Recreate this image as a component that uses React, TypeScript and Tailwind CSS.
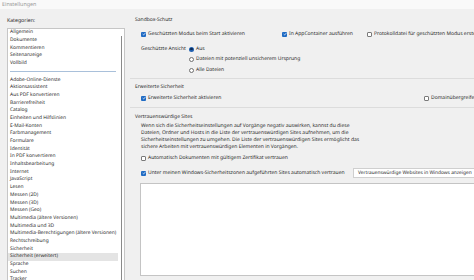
import React from "react";

const top = [
  "Allgemein",
  "Dokumente",
  "Kommentieren",
  "Seitenanzeige",
  "Vollbild",
];
const rest = [
  "Adobe-Online-Dienste",
  "Aktionsassistent",
  "Aus PDF konvertieren",
  "Barrierefreiheit",
  "Catalog",
  "Einheiten und Hilfslinien",
  "E-Mail-Konten",
  "Farbmanagement",
  "Formulare",
  "Identität",
  "In PDF konvertieren",
  "Inhaltsbearbeitung",
  "Internet",
  "JavaScript",
  "Lesen",
  "Messen (2D)",
  "Messen (3D)",
  "Messen (Geo)",
  "Multimedia (ältere Versionen)",
  "Multimedia und 3D",
  "Multimedia-Berechtigungen (ältere Versionen)",
  "Rechtschreibung",
  "Sicherheit",
  "Sicherheit (erweitert)",
  "Sprache",
  "Suchen",
  "Tracker",
];

function Check({ on }: { on?: boolean }) {
  return on ? (
    <span className="w-[5px] h-[5px] shrink-0 rounded-[1px] bg-[#1f6bc4] flex items-center justify-center">
      <svg width="4" height="4" viewBox="0 0 8 8">
        <path d="M1.3 4.2 L3.2 6 L6.8 2" stroke="#fff" strokeWidth="1.4" fill="none" />
      </svg>
    </span>
  ) : (
    <span className="w-[5px] h-[5px] shrink-0 rounded-[1px] bg-white border border-[#7a7a7a] [border-width:0.7px]" />
  );
}

function Radio({ on }: { on?: boolean }) {
  return on ? (
    <span className="w-[5px] h-[5px] shrink-0 rounded-full bg-[#1f5fb0] flex items-center justify-center">
      <span className="w-[2.4px] h-[2.4px] rounded-full bg-[#0b2a55]" />
    </span>
  ) : (
    <span className="w-[5px] h-[5px] shrink-0 rounded-full bg-white border border-[#6f6f6f] [border-width:0.7px]" />
  );
}

function Item({ label, sel }: { label: string; sel?: boolean }) {
  return (
    <div
      className={`h-[7.7px] shrink-0 flex items-center pl-[2px] whitespace-nowrap ${
        sel ? "bg-[#e4e4e4]" : ""
      }`}
    >
      {label}
    </div>
  );
}

export default function App() {
  return (
    <div className="w-[474px] h-[280px] overflow-hidden bg-[#f0f0f0] font-['Noto_Sans',sans-serif] text-[5px] [text-rendering:geometricPrecision] leading-none text-[#2a2a2a] flex flex-col">
      <div className="h-[9px] shrink-0 bg-[#f9f9f9] pl-[2px] flex items-center text-[#9a9a9a] text-[5.4px]">
        Einstellungen
      </div>
      <div className="flex flex-1 min-h-0">
        {/* left column */}
        <div className="w-[130px] shrink-0 pl-[7px] pr-[5px] pt-[9px] flex flex-col">
          <div className="h-[6px] flex items-center mb-[4px] text-[5.2px]">Kategorien:</div>
          <div className="flex-1 min-h-0 bg-white border border-[#c6c6c6] border-b-0 flex overflow-hidden text-[4.9px]">
            <div className="flex-1 min-w-0 flex flex-col">
              {top.map((t) => (
                <Item key={t} label={t} />
              ))}
              <div className="h-[8.7px] shrink-0 flex items-center px-[2px]">
                <div className="h-px w-full bg-[#a9c0da]" />
              </div>
              {rest.map((t) => (
                <Item key={t} label={t} sel={t === "Sicherheit (erweitert)"} />
              ))}
            </div>
            <div className="w-[6px] shrink-0 flex justify-center pt-[7px]">
              <div className="w-px h-full bg-[#8a8a8a]" />
            </div>
          </div>
        </div>

        {/* right column */}
        <div className="flex-1 min-w-0 flex flex-col whitespace-nowrap overflow-hidden">
          {/* Sandbox-Schutz */}
          <div className="h-[70px] shrink-0 border-b border-[#dcdcdc] pl-[5px] pt-[8px] flex flex-col">
            <div className="h-[6px] flex items-center">Sandbox-Schutz</div>
            <div className="mt-[8px] h-[6px] flex items-center pl-[6px]">
              <div className="w-[141px] shrink-0 flex items-center gap-[2px]">
                <Check on />
                <span>Geschützten Modus beim Start aktivieren</span>
              </div>
              <div className="w-[85px] shrink-0 flex items-center gap-[2px]">
                <Check on />
                <span>In AppContainer ausführen</span>
              </div>
              <div className="shrink-0 flex items-center gap-[2px]">
                <Check />
                <span>Protokolldatei für geschützten Modus erstellen</span>
              </div>
            </div>
            <div className="mt-[6.75px] flex pl-[6px]">
              <div className="w-[48px] shrink-0 h-[10.5px] flex items-center">Geschützte Ansicht</div>
              <div className="flex flex-col">
                <div className="h-[10.5px] flex items-center gap-[2px]">
                  <Radio on />
                  <span>Aus</span>
                </div>
                <div className="h-[10.5px] flex items-center gap-[2px]">
                  <Radio />
                  <span>Dateien mit potenziell unsicherem Ursprung</span>
                </div>
                <div className="h-[10.5px] flex items-center gap-[2px]">
                  <Radio />
                  <span>Alle Dateien</span>
                </div>
              </div>
            </div>
          </div>

          {/* Erweiterte Sicherheit */}
          <div className="h-[29px] shrink-0 border-b border-[#dcdcdc] pl-[5px] pt-[5px] flex flex-col">
            <div className="h-[6px] flex items-center">Erweiterte Sicherheit</div>
            <div className="mt-[5px] h-[6px] flex items-center pl-[6px]">
              <div className="w-[283px] shrink-0 flex items-center gap-[2px]">
                <Check on />
                <span>Erweiterte Sicherheit aktivieren</span>
              </div>
              <div className="shrink-0 flex items-center gap-[2px] mt-[1px]">
                <Check />
                <span>Domainübergreifende Protokolldatei erstellen</span>
              </div>
            </div>
          </div>

          {/* Vertrauenswürdige Sites */}
          <div className="flex-1 pl-[5px] pt-[6px] flex flex-col">
            <div className="h-[6px] flex items-center">Vertrauenswürdige Sites</div>
            <div className="mt-[2.5px] pl-[6px] leading-[7px]">
              <div>Wenn sich die Sicherheitseinstellungen auf Vorgänge negativ auswirken, kannst du diese</div>
              <div>Dateien, Ordner und Hosts in die Liste der vertrauenswürdigen Sites aufnehmen, um die</div>
              <div>Sicherheitseinstellungen zu umgehen. Die Liste der vertrauenswürdigen Sites ermöglicht das</div>
              <div>sichere Arbeiten mit vertrauenswürdigen Elementen in Vorgängen.</div>
            </div>
            <div className="mt-[5px] h-[6px] flex items-center gap-[2px] pl-[6px]">
              <Check />
              <span>Automatisch Dokumenten mit gültigem Zertifikat vertrauen</span>
            </div>
            <div className="mt-[6.5px] h-[10px] flex items-center pl-[6px]">
              <div className="w-[212px] shrink-0 flex items-center gap-[2px]">
                <Check on />
                <span>Unter meinen Windows-Sicherheitszonen aufgeführten Sites automatisch vertrauen</span>
              </div>
              <div className="h-[10px] w-[125px] shrink-0 bg-white border border-[#cfcfcf] flex items-center pl-[4px] text-[4.8px]">
                Vertrauenswürdige Websites in Windows anzeigen
              </div>
            </div>
            <div className="mt-[5px] ml-[5px] h-[93px] shrink-0 bg-white border border-[#c4c4c4] border-r-0" />
          </div>
        </div>
      </div>
    </div>
  );
}
